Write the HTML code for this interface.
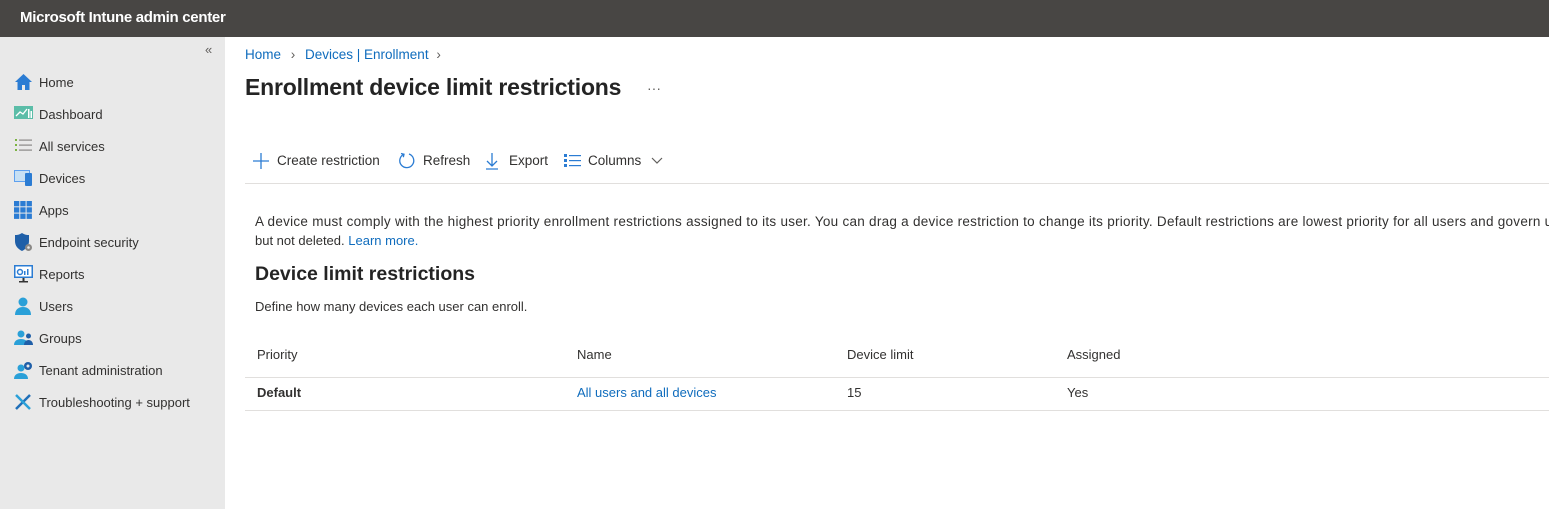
<!DOCTYPE html>
<html><head><meta charset="utf-8"><style>
*{margin:0;padding:0;box-sizing:border-box}
body{width:1549px;height:509px;overflow:hidden;font-family:"Liberation Sans",sans-serif;color:#323130;background:#fff;position:relative}
.top{position:absolute;left:0;top:0;width:1549px;height:37px;background:#484644;color:#fff;font-weight:bold;font-size:15px;line-height:36px;padding-left:20px;letter-spacing:-0.3px}
.side{position:absolute;left:0;top:37px;width:225px;height:472px;background:#e9e9e9}
.nav{position:absolute;left:14px;font-size:13px;height:20px;line-height:21px}
.nav svg{position:absolute;left:0;top:1px}
.nav span{position:absolute;left:25px;white-space:nowrap}
.a{position:absolute;white-space:nowrap}
.blue{color:#0f6cbd}
.line{position:absolute;left:245px;width:1304px;height:1px;background:#e1dfdd}
.tb{position:absolute;top:152px;font-size:13.5px;line-height:18px;white-space:nowrap}
</style></head><body>
<div class="top">Microsoft Intune admin center</div>
<div class="side">
<div class="a" style="left:205px;top:5px;font-size:13px;color:#605e5c">«</div>
</div>
<div class="nav" style="top:72px"><svg width="19" height="18" viewBox="0 0 19 18"><path d="M9.5 1L1 9h2.5v8h4.5v-5h3v5h4.5V9H18z" fill="#2b7cd3"/></svg><span>Home</span></div>
<div class="nav" style="top:104px"><svg width="19" height="16" viewBox="0 0 19 16"><rect x="0" y="1" width="19" height="13" fill="#5bbda8"/><path d="M2 11l4-4 3 2 4-5" stroke="#fff" fill="none" stroke-width="1.3"/><rect x="14" y="4" width="1.5" height="9" fill="#fff"/><rect x="16.5" y="6" width="1.5" height="7" fill="#fff"/></svg><span>Dashboard</span></div>
<div class="nav" style="top:136px"><svg width="19" height="16" viewBox="0 0 19 16"><g fill="#7cb342"><rect x="1" y="2" width="2" height="2"/><rect x="1" y="7" width="2" height="2"/><rect x="1" y="12" width="2" height="2"/></g><g fill="#8a8886"><rect x="5" y="2.5" width="13" height="1.2"/><rect x="5" y="7.5" width="13" height="1.2"/><rect x="5" y="12.5" width="13" height="1.2"/></g></svg><span>All services</span></div>
<div class="nav" style="top:168px"><svg width="19" height="17" viewBox="0 0 19 17"><rect x="0" y="1" width="16" height="12" fill="#5ea0ef"/><rect x="1" y="2" width="14" height="10" fill="#c7e0f4"/><rect x="11" y="4" width="7" height="13" rx="1" fill="#2b7cd3"/></svg><span>Devices</span></div>
<div class="nav" style="top:200px"><svg width="18" height="18" viewBox="0 0 18 18"><g fill="#2b7cd3"><rect x="0" y="0" width="5.3" height="5.3"/><rect x="6.3" y="0" width="5.3" height="5.3"/><rect x="12.6" y="0" width="5.3" height="5.3"/><rect x="0" y="6.3" width="5.3" height="5.3"/><rect x="6.3" y="6.3" width="5.3" height="5.3"/><rect x="12.6" y="6.3" width="5.3" height="5.3"/><rect x="0" y="12.6" width="5.3" height="5.3"/><rect x="6.3" y="12.6" width="5.3" height="5.3"/><rect x="12.6" y="12.6" width="5.3" height="5.3"/></g></svg><span>Apps</span></div>
<div class="nav" style="top:232px"><svg width="19" height="19" viewBox="0 0 19 19"><path d="M8 0C5 2 3 2 1 2v6c0 5 3 8 7 10 4-2 7-5 7-10V2c-2 0-4 0-7-2z" fill="#1f5fa8"/><circle cx="14.5" cy="14.5" r="3.5" fill="#8a8886"/><circle cx="14.5" cy="14.5" r="1.3" fill="#e9e9e9"/></svg><span>Endpoint security</span></div>
<div class="nav" style="top:264px"><svg width="19" height="18" viewBox="0 0 19 18"><rect x="0" y="0" width="19" height="13" fill="#2b7cd3"/><rect x="1.5" y="1.5" width="16" height="10" fill="#fff"/><circle cx="6" cy="7" r="2.5" fill="none" stroke="#2b7cd3" stroke-width="1.5"/><rect x="10" y="6" width="1.5" height="4" fill="#2b7cd3"/><rect x="13" y="4" width="1.5" height="6" fill="#2b7cd3"/><rect x="8.5" y="13" width="2" height="3" fill="#333"/><rect x="5" y="16" width="9" height="1.5" fill="#333"/></svg><span>Reports</span></div>
<div class="nav" style="top:296px"><svg width="18" height="18" viewBox="0 0 18 18"><circle cx="9" cy="5" r="4.5" fill="#2aa0d8"/><path d="M1 18c0-5 3-8 8-8s8 3 8 8z" fill="#2aa0d8"/></svg><span>Users</span></div>
<div class="nav" style="top:328px"><svg width="19" height="17" viewBox="0 0 19 17"><circle cx="7" cy="5" r="3.5" fill="#2aa0d8"/><path d="M0 16c0-4 3-6 7-6s7 2 7 6z" fill="#2aa0d8"/><circle cx="14.5" cy="7" r="2.5" fill="#1f5fa8"/><path d="M10 16c0-3 2-5 4.5-5s4.5 2 4.5 5z" fill="#1f5fa8"/></svg><span>Groups</span></div>
<div class="nav" style="top:360px"><svg width="19" height="18" viewBox="0 0 19 18"><circle cx="7" cy="7" r="3.5" fill="#2aa0d8"/><path d="M0 18c0-4 3-6 7-6s7 2 7 6z" fill="#2aa0d8"/><circle cx="14" cy="5" r="4" fill="#1f5fa8"/><circle cx="14" cy="5" r="1.5" fill="#e9e9e9"/></svg><span>Tenant administration</span></div>
<div class="nav" style="top:392px"><svg width="18" height="18" viewBox="0 0 18 18"><path d="M2 16L16 2" stroke="#1f6fb8" stroke-width="2.5"/><path d="M2 2l14 14" stroke="#2aa0d8" stroke-width="2.5"/></svg><span>Troubleshooting + support</span></div>

<div class="a blue" style="left:245px;top:47px;font-size:13.5px">Home <span style="color:#605e5c;margin:0 6px">›</span> Devices | Enrollment <span style="color:#605e5c;margin-left:4px">›</span></div>
<div class="a" style="left:245px;top:74px;font-size:23px;font-weight:600;letter-spacing:-0.2px;color:#242424">Enrollment device limit restrictions</div>
<div class="a" style="left:647px;top:80px;font-size:14px;color:#605e5c">···</div>

<svg class="a" style="left:253px;top:153px" width="16" height="16" viewBox="0 0 16 16"><path d="M8 0v16M0 8h16" stroke="#2b7cd3" stroke-width="1.3"/></svg>
<div class="tb" style="left:277px">Create restriction</div>
<svg class="a" style="left:398px;top:152px" width="18" height="18" viewBox="0 0 18 18"><path d="M6 2.2A7 7 0 1 0 11 2" fill="none" stroke="#2b7cd3" stroke-width="1.3"/><path d="M3 1.5l3 .7-.7 3" fill="none" stroke="#2b7cd3" stroke-width="1.3"/></svg>
<div class="tb" style="left:423px">Refresh</div>
<svg class="a" style="left:485px;top:152px" width="14" height="18" viewBox="0 0 14 18"><path d="M7 1v13M2 9l5 5 5-5M1 17h12" fill="none" stroke="#2b7cd3" stroke-width="1.3"/></svg>
<div class="tb" style="left:509px">Export</div>
<svg class="a" style="left:564px;top:154px" width="17" height="13" viewBox="0 0 17 13"><g fill="#2b7cd3"><rect x="0" y="0" width="3" height="3"/><rect x="0" y="5" width="3" height="3"/><rect x="0" y="10" width="3" height="3"/><rect x="5" y="1" width="12" height="1.2"/><rect x="5" y="6" width="12" height="1.2"/><rect x="5" y="11" width="12" height="1.2"/></g></svg>
<div class="tb" style="left:588px">Columns</div>
<svg class="a" style="left:651px;top:157px" width="12" height="8" viewBox="0 0 12 8"><path d="M1 1l5 5 5-5" fill="none" stroke="#605e5c" stroke-width="1.2"/></svg>
<div class="line" style="top:183px"></div>

<div class="a" style="left:255px;top:214px;font-size:13.5px;letter-spacing:0.27px">A device must comply with the highest priority enrollment restrictions assigned to its user. You can drag a device restriction to change its priority. Default restrictions are lowest priority for all users and govern us</div>
<div class="a" style="left:255px;top:233px;font-size:13px">but not deleted. <span class="blue">Learn more.</span></div>
<div class="a" style="left:255px;top:263px;font-size:19.5px;font-weight:600;color:#242424">Device limit restrictions</div>
<div class="a" style="left:255px;top:299px;font-size:13px">Define how many devices each user can enroll.</div>

<div class="a" style="left:257px;top:347px;font-size:13px">Priority</div>
<div class="a" style="left:577px;top:347px;font-size:13px">Name</div>
<div class="a" style="left:847px;top:347px;font-size:13px">Device limit</div>
<div class="a" style="left:1067px;top:347px;font-size:13px">Assigned</div>
<div class="line" style="top:377px"></div>
<div class="a" style="left:257px;top:385px;font-size:13px;font-weight:bold">Default</div>
<div class="a blue" style="left:577px;top:385px;font-size:13px">All users and all devices</div>
<div class="a" style="left:847px;top:385px;font-size:13px">15</div>
<div class="a" style="left:1067px;top:385px;font-size:13px">Yes</div>
<div class="line" style="top:410px"></div>
</body></html>
